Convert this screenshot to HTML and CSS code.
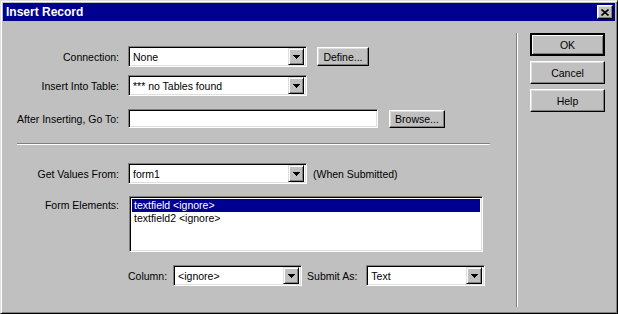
FILE: index.html
```html
<!DOCTYPE html>
<html lang="en">
<head>
    <meta charset="UTF-8">
    <title>Insert Record</title>
    <link rel="stylesheet" href="styles.css">
</head>
<body>
    <div class="window">
        <div class="titlebar">
            <span class="title">Insert Record</span>
            <span class="close">
                <svg width="8" height="7" viewBox="0 0 8 7"><path d="M0.5 0.5 L7.5 6.5 M7.5 0.5 L0.5 6.5" stroke="#000" stroke-width="1.6" fill="none"/></svg>
            </span>
        </div>
        <div class="content">
            <div class="main">
                <div class="row row-conn">
                    <span class="lbl">Connection:</span>
                    <div class="combo combo-std"><span class="val">None</span><span class="drop"><svg width="7" height="4" viewBox="0 0 7 4"><polygon points="0,0 7,0 3.5,4" fill="#000"/></svg></span></div>
                    <span class="btn btn-define">Define...</span>
                </div>
                <div class="row row-table">
                    <span class="lbl">Insert Into Table:</span>
                    <div class="combo combo-std"><span class="val">*** no Tables found</span><span class="drop"><svg width="7" height="4" viewBox="0 0 7 4"><polygon points="0,0 7,0 3.5,4" fill="#000"/></svg></span></div>
                </div>
                <div class="row row-goto">
                    <span class="lbl">After Inserting, Go To:</span>
                    <div class="textbox"></div>
                    <span class="btn btn-browse">Browse...</span>
                </div>
                <div class="sep"></div>
                <div class="row row-from">
                    <span class="lbl">Get Values From:</span>
                    <div class="combo combo-std"><span class="val">form1</span><span class="drop"><svg width="7" height="4" viewBox="0 0 7 4"><polygon points="0,0 7,0 3.5,4" fill="#000"/></svg></span></div>
                    <span class="note">(When Submitted)</span>
                </div>
                <div class="row row-elems">
                    <span class="lbl lbl-top">Form Elements:</span>
                    <div class="listbox">
                        <div class="item selected">textfield &lt;ignore&gt;</div>
                        <div class="item">textfield2 &lt;ignore&gt;</div>
                    </div>
                </div>
                <div class="row row-column">
                    <span class="lbl-inline">Column:</span>
                    <div class="combo combo-col"><span class="val">&lt;ignore&gt;</span><span class="drop"><svg width="7" height="4" viewBox="0 0 7 4"><polygon points="0,0 7,0 3.5,4" fill="#000"/></svg></span></div>
                    <span class="lbl-inline lbl-submit">Submit As:</span>
                    <div class="combo combo-type"><span class="val">Text</span><span class="drop"><svg width="7" height="4" viewBox="0 0 7 4"><polygon points="0,0 7,0 3.5,4" fill="#000"/></svg></span></div>
                </div>
            </div>
            <div class="vline"></div>
            <div class="side">
                <span class="btn btn-side btn-default">OK</span>
                <span class="btn btn-side">Cancel</span>
                <span class="btn btn-side">Help</span>
            </div>
        </div>
    </div>
</body>
</html>
```

FILE: styles.css
```css
body { margin: 0; padding: 0; background: #c0c0c0; font-family: "Liberation Sans", Arial, sans-serif; font-size: 10.5px; color: #000; }

/* window frame */
.window { width: 618px; height: 314px; box-sizing: border-box; background: #c0c0c0; border: 1px solid; border-color: #dfdfdf #000 #000 #dfdfdf; box-shadow: inset 1px 1px #fff, inset -1px -1px #808080; padding: 2px; display: flex; flex-direction: column; }
.titlebar { height: 18px; background: #000090; display: flex; align-items: center; justify-content: space-between; padding: 0 2px 0 3px; }
.title { color: #fff; font-weight: bold; font-size: 12px; }
.close { width: 16px; height: 14px; box-sizing: border-box; background: #c0c0c0; border: 1px solid; border-color: #fff #000 #000 #fff; box-shadow: inset -1px -1px #808080, inset 1px 1px #dfdfdf; display: flex; align-items: center; justify-content: center; }

.content { flex: 1; display: flex; }
.main { width: 513px; padding-top: 25px; box-sizing: border-box; }
.vline { width: 0; height: 274px; margin-top: 12px; border-left: 1px solid #808080; border-right: 1px solid #fff; }
.side { padding: 12px 0 0 12px; display: flex; flex-direction: column; gap: 5px; }

/* rows */
.row { display: flex; align-items: center; }
.lbl { width: 116px; text-align: right; margin-right: 9px; flex: none; }
.lbl-top { align-self: flex-start; margin-top: 3px; margin-right: 10px; }
.row-table { margin-top: 8px; }
.row-goto { margin-top: 13px; }
.row-from { margin-top: 18px; }
.row-elems { margin-top: 12px; align-items: flex-start; }
.row-column { margin-top: 13px; padding-left: 125px; }
.lbl-inline { margin-right: 6px; }
.lbl-submit { margin-left: 5px; margin-right: 9px; }
.note { margin-left: 6px; }

.sep { margin: 15px 0 0 14px; width: 473px; height: 0; border-top: 1px solid #808080; border-bottom: 1px solid #fff; }

/* controls */
.combo, .textbox, .listbox { box-sizing: border-box; background: #fff; border: 1px solid; border-color: #808080 #fff #fff #808080; box-shadow: inset 1px 1px #000, inset -1px -1px #dfdfdf; }
.combo { height: 21px; display: flex; align-items: center; justify-content: space-between; padding: 2px 2px 2px 4px; }
.combo-std { width: 179px; }
.combo-col { width: 129px; }
.combo-type { width: 119px; }
.drop { width: 16px; height: 17px; box-sizing: border-box; background: #c0c0c0; border: 1px solid; border-color: #dfdfdf #000 #000 #dfdfdf; box-shadow: inset 1px 1px #fff, inset -1px -1px #808080; display: flex; align-items: center; justify-content: center; }
.drop svg { display: block; shape-rendering: crispEdges; }
.textbox { width: 250px; height: 19px; }
.listbox { width: 354px; height: 56px; padding: 2px; }
.item { height: 13px; line-height: 13px; padding-left: 2px; }
.item.selected { background: #000090; color: #fff; }

.btn { box-sizing: border-box; display: flex; align-items: center; justify-content: center; background: #c0c0c0; border: 1px solid; border-color: #fff #000 #000 #fff; box-shadow: inset -1px -1px #808080, inset 1px 1px #dfdfdf; }
.btn-define { width: 52px; height: 19px; margin-left: 10px; }
.btn-browse { width: 56px; height: 18px; margin-left: 11px; }
.btn-side { width: 75px; height: 23px; }
.btn-default { outline: 1px solid #000; outline-offset: -1px; border-width: 2px; border-color: #000; box-shadow: inset 1px 1px #fff, inset -1px -1px #808080; }
```
